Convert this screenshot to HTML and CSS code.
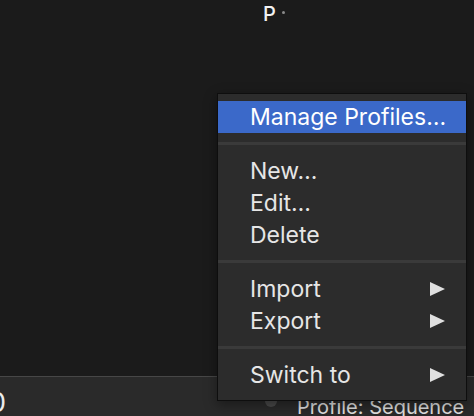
FILE: index.html
```html
<!DOCTYPE html>
<html>
<head>
<meta charset="utf-8">
<link rel="stylesheet" href="styles.css">
</head>
<body>
<div class="app">
  <div class="top">
    <span class="top-letter">P</span>
    <span class="top-dot"></span>
  </div>
  <div class="canvas"></div>
  <div class="statusbar">
    <span class="edge-glyph">0</span>
    <span class="status-dot"></span>
    <span class="profile">Profile: Sequence</span>
  </div>

  <div class="menu">
    <div class="item active">Manage Profiles…</div>
    <div class="sep"></div>
    <div class="item">New…</div>
    <div class="item">Edit…</div>
    <div class="item">Delete</div>
    <div class="sep"></div>
    <div class="item">Import<svg class="arrow" viewBox="0 0 15 14"><path d="M0 0 L15 7 L0 14 Z"/></svg></div>
    <div class="item">Export<svg class="arrow" viewBox="0 0 15 14"><path d="M0 0 L15 7 L0 14 Z"/></svg></div>
    <div class="sep"></div>
    <div class="item">Switch to<svg class="arrow" viewBox="0 0 15 14"><path d="M0 0 L15 7 L0 14 Z"/></svg></div>
  </div>
</div>
</body>
</html>
```

FILE: styles.css
```css
* { box-sizing: border-box; }
html, body {
  margin: 0;
  padding: 0;
  background: #1b1b1b;
}
.app {
  position: relative;
  width: 474px;
  height: 416px;
  overflow: hidden;
  display: flex;
  flex-direction: column;
  font-family: Inter, "Liberation Sans", sans-serif;
  background: #1b1b1b;
}
.top {
  display: flex;
  align-items: flex-start;
  padding: 3px 0 0 263px;
  height: 26px;
}
.top-letter {
  color: #f2f2f2;
  font-size: 20px;
  font-weight: 500;
  line-height: 22px;
}
.top-dot {
  width: 3px;
  height: 3px;
  background: #8a8a8a;
  border-radius: 50%;
  margin: 8px 0 0 6px;
}
.canvas {
  flex: 1;
}
.statusbar {
  height: 40px;
  background: #2a2a2a;
  border-top: 1px solid #474747;
  display: flex;
  align-items: flex-start;
  color: #e0e0e0;
}
.statusbar > * {
  flex-shrink: 0;
}
.edge-glyph {
  font-size: 27px;
  line-height: 30px;
  margin: 11px 0 0 -11px;
  color: #ececec;
}
.status-dot {
  width: 12px;
  height: 12px;
  border-radius: 50%;
  background: #4a4a4a;
  margin: 18px 0 0 259px;
}
.profile {
  font-size: 20px;
  line-height: 26px;
  margin: 17px 0 0 20px;
  white-space: nowrap;
}
.menu {
  position: absolute;
  left: 217px;
  top: 93px;
  width: 250px;
  background: #2c2c2c;
  border: 1px solid #0e0e0e;
  padding: 7px 0 9px;
  box-shadow: 0 4px 12px rgba(0,0,0,0.4);
}
.item {
  height: 32px;
  display: flex;
  align-items: center;
  justify-content: space-between;
  padding: 0 21px 0 32px;
  font-size: 23px;
  color: #e6e6e6;
  white-space: nowrap;
}
.item.active {
  background: #3b69c9;
  color: #ffffff;
}
.sep {
  height: 3px;
  background: #3a3a3a;
  margin: 9px 0 10px;
}
.arrow {
  width: 15px;
  height: 14px;
  fill: #e0e0e0;
}
```
